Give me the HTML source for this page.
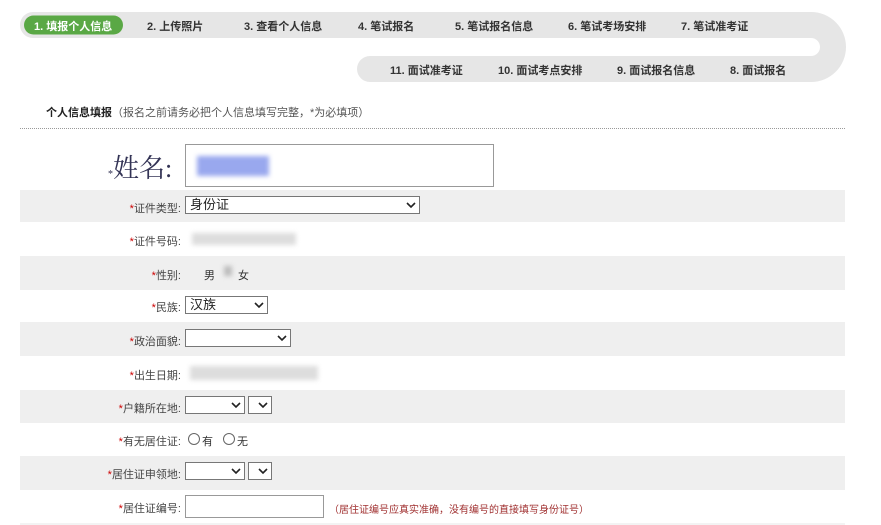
<!DOCTYPE html>
<html><head><meta charset="utf-8"><style>
body{margin:0;width:881px;height:525px;background:#fff;font-family:"Liberation Sans","Noto Sans CJK SC",sans-serif;position:relative;overflow:hidden}
.a{position:absolute}
.nv{position:absolute;font-size:11px;font-weight:bold;color:#333;white-space:nowrap}
.row{position:absolute;left:20px;width:825px}
.g{background:#efefef}
.lb{position:absolute;right:700px;font-size:11px;color:#444;white-space:nowrap;z-index:2}
.lb i{color:#c00;font-style:normal}
.sel{position:absolute;height:18px;border:1px solid #777;background:#fff;box-sizing:border-box;font-size:13px;color:#222;padding-left:4px;line-height:16px}
.sel svg{position:absolute;right:3px;top:5px}
.blur{position:absolute;filter:blur(2.5px)}
</style></head><body>
<svg class="a" style="left:0;top:0" width="881" height="90">
<path d="M33,12 H811 A35,35 0 0 1 811,82 H370 A13,13 0 0 1 370,56 H811 A9,9 0 0 0 811,38 H33 A13,13 0 0 1 33,12 Z" fill="#e6e6e6"/>
<rect x="24" y="15.5" width="99" height="19" rx="9.5" fill="#5aa845"/>
</svg>
<div class="nv" style="left:34px;top:18px;color:#fff">1. 填报个人信息</div>
<div class="nv" style="left:147px;top:18px">2. 上传照片</div>
<div class="nv" style="left:244px;top:18px">3. 查看个人信息</div>
<div class="nv" style="left:358px;top:18px">4. 笔试报名</div>
<div class="nv" style="left:455px;top:18px">5. 笔试报名信息</div>
<div class="nv" style="left:568px;top:18px">6. 笔试考场安排</div>
<div class="nv" style="left:681px;top:18px">7. 笔试准考证</div>
<div class="nv" style="left:390px;top:62px">11. 面试准考证</div>
<div class="nv" style="left:498px;top:62px">10. 面试考点安排</div>
<div class="nv" style="left:617px;top:62px">9. 面试报名信息</div>
<div class="nv" style="left:730px;top:62px">8. 面试报名</div>

<div class="a" style="left:46px;top:104px;font-size:11px;color:#555;white-space:nowrap"><b style="color:#222">个人信息填报</b>（报名之前请务必把个人信息填写完整，*为必填项）</div>
<div class="a" style="left:20px;top:128px;width:825px;border-top:1px dotted #999"></div>

<div class="a" style="left:108px;top:148px;font-family:'Liberation Serif','Noto Serif CJK SC',serif;font-size:26px;color:#335;white-space:nowrap"><span style="font-size:10px">*</span>姓名:</div>
<div class="a" style="left:185px;top:144px;width:309px;height:43px;border:1px solid #999;box-sizing:border-box"></div>
<div class="blur" style="left:197px;top:156px;width:72px;height:20px;background:#99a8ee"></div>

<div class="row g" style="top:190px;height:32px"></div>
<div class="lb" style="top:200px"><i>*</i>证件类型:</div>
<div class="sel" style="left:185px;top:196px;width:235px">身份证<svg width="10" height="7"><path d="M1,1 L5,5 L9,1" stroke="#222" stroke-width="1.6" fill="none"/></svg></div>

<div class="lb" style="top:233px"><i>*</i>证件号码:</div>
<div class="blur" style="left:192px;top:233px;width:104px;height:12px;background:#ddd"></div>

<div class="row g" style="top:256px;height:34px"></div>
<div class="lb" style="top:267px"><i>*</i>性别:</div>
<div class="a" style="left:204px;top:267px;font-size:11px;color:#333">男</div>
<div class="blur" style="left:224px;top:266px;width:8px;height:10px;background:#bbb"></div>
<div class="a" style="left:238px;top:267px;font-size:11px;color:#333">女</div>

<div class="lb" style="top:299px"><i>*</i>民族:</div>
<div class="sel" style="left:185px;top:296px;width:83px">汉族<svg width="10" height="7"><path d="M1,1 L5,5 L9,1" stroke="#222" stroke-width="1.6" fill="none"/></svg></div>

<div class="row g" style="top:322px;height:34px"></div>
<div class="lb" style="top:333px"><i>*</i>政治面貌:</div>
<div class="sel" style="left:185px;top:329px;width:106px"><svg width="10" height="7"><path d="M1,1 L5,5 L9,1" stroke="#222" stroke-width="1.6" fill="none"/></svg></div>

<div class="lb" style="top:367px"><i>*</i>出生日期:</div>
<div class="blur" style="left:190px;top:366px;width:128px;height:14px;background:#ddd"></div>

<div class="row g" style="top:390px;height:33px"></div>
<div class="lb" style="top:400px"><i>*</i>户籍所在地:</div>
<div class="sel" style="left:185px;top:396px;width:60px"><svg width="10" height="7"><path d="M1,1 L5,5 L9,1" stroke="#222" stroke-width="1.6" fill="none"/></svg></div>
<div class="sel" style="left:248px;top:396px;width:24px"><svg width="10" height="7"><path d="M1,1 L5,5 L9,1" stroke="#222" stroke-width="1.6" fill="none"/></svg></div>

<div class="lb" style="top:433px"><i>*</i>有无居住证:</div>
<div class="a" style="left:188px;top:433px;width:10px;height:10px;border:1px solid #666;border-radius:50%"></div>
<div class="a" style="left:202px;top:433px;font-size:11px;color:#333">有</div>
<div class="a" style="left:223px;top:433px;width:10px;height:10px;border:1px solid #666;border-radius:50%"></div>
<div class="a" style="left:237px;top:433px;font-size:11px;color:#333">无</div>

<div class="row g" style="top:456px;height:34px"></div>
<div class="lb" style="top:466px"><i>*</i>居住证申领地:</div>
<div class="sel" style="left:185px;top:462px;width:60px"><svg width="10" height="7"><path d="M1,1 L5,5 L9,1" stroke="#222" stroke-width="1.6" fill="none"/></svg></div>
<div class="sel" style="left:248px;top:462px;width:24px"><svg width="10" height="7"><path d="M1,1 L5,5 L9,1" stroke="#222" stroke-width="1.6" fill="none"/></svg></div>

<div class="lb" style="top:500px"><i>*</i>居住证编号:</div>
<div class="a" style="left:185px;top:495px;width:139px;height:23px;border:1px solid #999;box-sizing:border-box"></div>
<div class="a" style="left:329px;top:501px;font-size:10px;color:#a03030;white-space:nowrap">（居住证编号应真实准确，没有编号的直接填写身份证号）</div>
<div class="row" style="top:523px;height:2px;background:#f3f3f3"></div>
</body></html>
